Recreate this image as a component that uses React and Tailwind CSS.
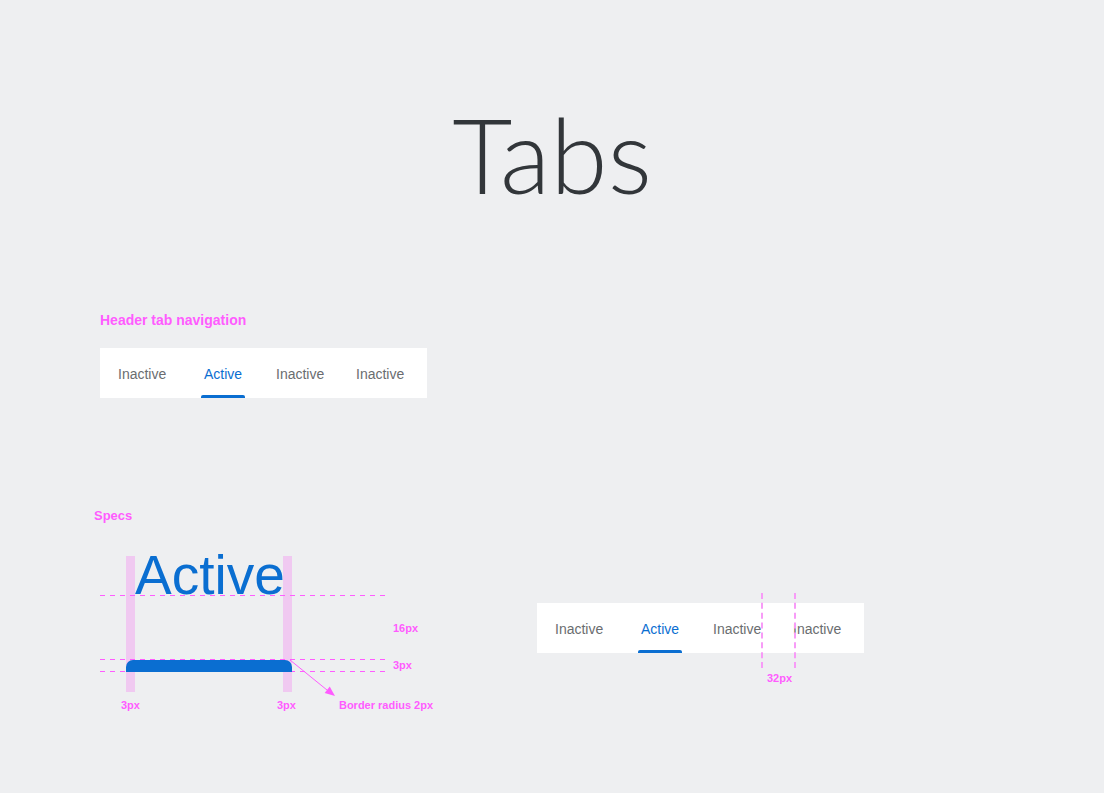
import React from "react";

function Tab({ label, active, width }) {
  return (
    <div className={`flex h-full shrink-0 ${width}`}>
      <div className="flex h-full flex-col">
        <div
          className={`flex flex-1 items-center px-[3px] pt-[5px] ${
            active ? "text-[#0a6ed1]" : "text-[#6a6d70]"
          }`}
        >
          {label}
        </div>
        <div
          className={`h-[3px] rounded-t-[2px] ${
            active ? "bg-[#0a6ed1]" : "bg-transparent"
          }`}
        />
      </div>
    </div>
  );
}

function TabBar({ children }) {
  return (
    <div className="relative flex h-[50px] w-[327px] shrink-0 bg-white pl-[15px] font-['Liberation_Sans',Arial,sans-serif] text-[14px]">
      <Tab label="Inactive" width="w-[86px]" />
      <Tab label="Active" active width="w-[72px]" />
      <Tab label="Inactive" width="w-[80px]" />
      <Tab label="Inactive" width="w-[60px]" />
      {children}
    </div>
  );
}

const hDash =
  "h-px w-[285px] bg-[repeating-linear-gradient(90deg,#ff5cff_0_5px,transparent_5px_10px)]";
const label =
  "font-['Liberation_Sans',Arial,sans-serif] text-[11px] font-bold leading-[14px] text-[#ff5cff]";

function SpecDiagram() {
  return (
    <div className="relative h-[180px] w-[437px] shrink-0">
      {/* guide bars */}
      <div className="absolute left-[26px] top-[16px] h-[136px] w-[9px] bg-[#f0c9f1]" />
      <div className="absolute left-[183px] top-[16px] h-[136px] w-[9px] bg-[#f0c9f1]" />

      {/* flow content */}
      <div className="relative flex flex-col">
        <div className="ml-[35px] mt-[8px] h-[47px] text-[55px] leading-none text-[#0a6ed1]">
          Active
        </div>
        <div className={hDash} />
        <div className="flex h-[63px] items-center">
          <div className={`${label} ml-[293px] mt-[1px]`}>16px</div>
        </div>
        <div className={hDash} />
        <div className="relative h-[11px]">
          <div className="absolute left-[26px] top-0 h-[12px] w-[166px] rounded-t-[7px] bg-[#0a6ed1]" />
          <div className={`${label} absolute left-[293px] -top-[2px]`}>3px</div>
        </div>
        <div className={hDash} />
        <div className="mt-[26px] flex">
          <div className={`${label} ml-[21px]`}>3px</div>
          <div className={`${label} ml-[137px]`}>3px</div>
          <div className={`${label} ml-[43px]`}>Border radius 2px</div>
        </div>
      </div>

      {/* arrow */}
      <svg
        className="absolute left-0 top-0"
        width="260"
        height="170"
        viewBox="0 0 260 170"
      >
        <line x1="190" y1="120" x2="227" y2="150" stroke="#ff5cff" strokeWidth="1" />
        <polygon points="235,156 229.7,146.6 224.7,152.9" fill="#ff5cff" />
      </svg>
    </div>
  );
}

export default function App() {
  return (
    <div className="min-h-screen w-full bg-[#eeeff1] pl-[100px] pt-[102px] font-['Liberation_Sans',Arial,sans-serif]">
      <h1 className="-ml-[100px] h-[104px] text-center font-['Lato',sans-serif] text-[104px] font-light leading-none text-[#32363a]">
        Tabs
      </h1>

      <div className="mt-[106px] text-[14px] font-bold leading-4 text-[#ff5cff]">
        Header tab navigation
      </div>
      <div className="mt-[20px]">
        <TabBar />
      </div>

      <div className="-ml-[6px] mt-[110px] text-[13px] font-bold leading-4 text-[#ff5cff]">
        Specs
      </div>

      <div className="mt-[16px] flex items-start">
        <SpecDiagram />
        <div className="mt-[63px]">
          <TabBar>
            <div className="absolute left-[224px] top-[-10px] h-[75px] border-l-2 border-dashed border-[#f79cf7]" />
            <div className="absolute left-[257px] top-[-10px] h-[75px] border-l-2 border-dashed border-[#f79cf7]" />
            <div className={`${label} absolute left-[230px] top-[68px]`}>32px</div>
          </TabBar>
        </div>
      </div>
    </div>
  );
}
